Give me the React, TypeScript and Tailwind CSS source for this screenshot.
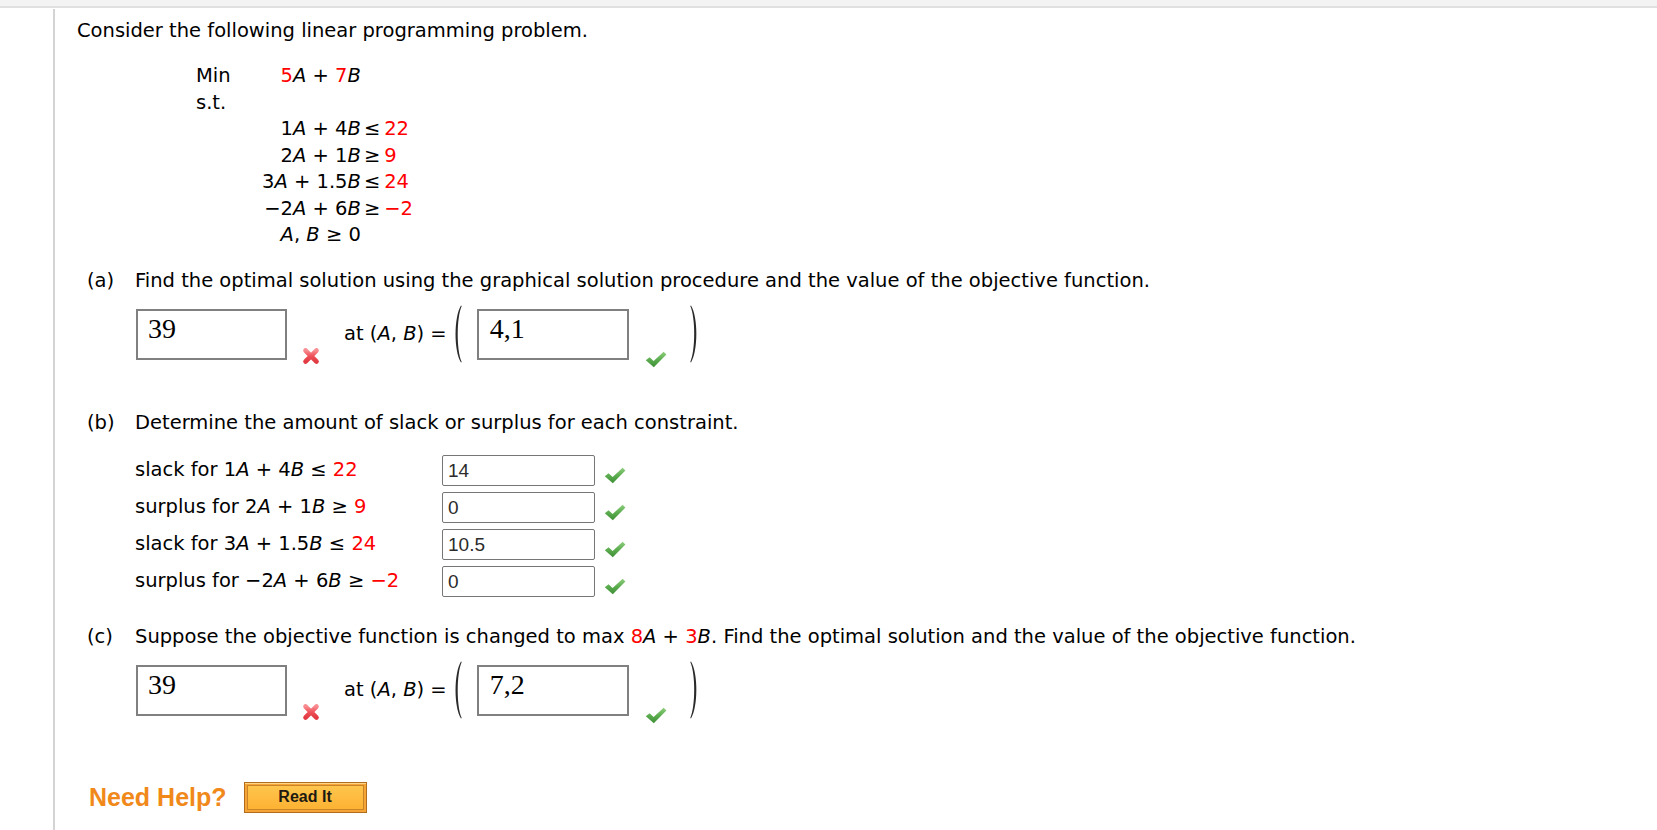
import React from "react";

const R = ({ children }: { children: React.ReactNode }) => (
  <span className="text-[#ff0000]">{children}</span>
);

const XIcon = ({ className = "" }: { className?: string }) => (
  <svg width="18" height="18" viewBox="0 0 18 18" className={className}>
    <defs>
      <linearGradient id="xg" x1="0" y1="0" x2="0" y2="1">
        <stop offset="0" stopColor="#f88c90" />
        <stop offset="0.5" stopColor="#ef525a" />
        <stop offset="1" stopColor="#e23a42" />
      </linearGradient>
    </defs>
    <path d="M3.5 3.5 L14.5 14.5 M14.5 3.5 L3.5 14.5" stroke="url(#xg)" strokeWidth="4.6" strokeLinecap="round" fill="none" />
  </svg>
);

const Check = ({ className = "" }: { className?: string }) => (
  <svg width="22" height="17" viewBox="0 0 22 17" className={className}>
    <defs>
      <linearGradient id="cg" x1="0" y1="0" x2="0" y2="1">
        <stop offset="0" stopColor="#8fce7e" />
        <stop offset="0.5" stopColor="#5cad4f" />
        <stop offset="1" stopColor="#3e8f36" />
      </linearGradient>
    </defs>
    <path d="M0.8 9.2 L4.6 6.2 L8.6 10 L18.6 0.8 L21.4 3.6 L8.8 16.2 Z" fill="url(#cg)" />
  </svg>
);

const ParenL = ({ className = "" }: { className?: string }) => (
  <svg width="9" height="58" viewBox="0 0 9 58" className={className}>
    <path d="M8 0.5 C0.8 12 0.8 46 8 57.5 L8.7 57 C3.4 45 3.4 13 8.7 1 Z" fill="#2a2a2a" />
  </svg>
);

const ParenR = ({ className = "" }: { className?: string }) => (
  <svg width="9" height="58" viewBox="0 0 9 58" className={className}>
    <path d="M1 0.5 C8.2 12 8.2 46 1 57.5 L0.3 57 C5.6 45 5.6 13 0.3 1 Z" fill="#2a2a2a" />
  </svg>
);

function AnswerRow({ value, pair }: { value: string; pair: string }) {
  return (
    <div className="flex h-[57px] items-center">
      <div className="ml-[1px] flex h-[51px] w-[151px] items-center border-2 border-[#808080] pb-[10px] pl-[10px] font-['Liberation_Serif'] text-[28px] leading-none text-black">
        {value}
      </div>
      <XIcon className="mb-[-2px] ml-[15px] self-end" />
      <span className="ml-[24px]">
        at (<i>A</i>, <i>B</i>) =
      </span>
      <ParenL className="ml-[6px]" />
      <div className="ml-[15px] flex h-[51px] w-[152px] items-center border-2 border-[#808080] pb-[10px] pl-[11px] font-['Liberation_Serif'] text-[28px] leading-none text-black">
        {pair}
      </div>
      <Check className="mb-[-5px] ml-[16px] self-end" />
      <ParenR className="ml-[23px]" />
    </div>
  );
}

function SlackRow({ label, value }: { label: React.ReactNode; value: string }) {
  return (
    <div className="flex h-[31px] items-center">
      <div className="w-[307px] whitespace-nowrap">{label}</div>
      <div className="flex h-[31px] w-[153px] items-center rounded-[2px] border border-[#767676] pl-[5px] font-['Liberation_Sans'] text-[19px] leading-none text-[#2b2b2b]">
        {value}
      </div>
      <Check className="ml-[9px] mt-[11px]" />
    </div>
  );
}

export default function App() {
  return (
    <div className="h-[830px] w-[1657px] overflow-hidden bg-white font-['DejaVu_Sans'] text-[19.5px] leading-[26px] text-black">
      <div className="h-[8px] border-b-2 border-[#e0e0e0] bg-[#f3f3f3]" />
      <div className="flex pt-[1px]">
        <div className="w-[53px] shrink-0" />
        <div className="h-[830px] flex-1 border-l-2 border-[#d4d4d4] pl-[22px] pt-[9px]">
          <div>Consider the following linear programming problem.</div>

          <div className="ml-[119px] mt-[19px] grid w-fit grid-cols-[66px_auto_auto] leading-[26.5px]">
            <div>Min</div>
            <div className="text-right">
              <R>5</R>
              <i>A</i> + <R>7</R>
              <i>B</i>
            </div>
            <div />
            <div>s.t.</div>
            <div />
            <div />
            <div />
            <div className="text-right">
              1<i>A</i> + 4<i>B</i>
            </div>
            <div className="pl-[3px]">
              ≤{"\u2009"}<R>22</R>
            </div>
            <div />
            <div className="text-right">
              2<i>A</i> + 1<i>B</i>
            </div>
            <div className="pl-[3px]">
              ≥{"\u2009"}<R>9</R>
            </div>
            <div />
            <div className="text-right">
              3<i>A</i> + 1.5<i>B</i>
            </div>
            <div className="pl-[3px]">
              ≤{"\u2009"}<R>24</R>
            </div>
            <div />
            <div className="text-right">
              −2<i>A</i> + 6<i>B</i>
            </div>
            <div className="pl-[3px]">
              ≥{"\u2009"}<R>−2</R>
            </div>
            <div />
            <div className="text-right">
              <i>A</i>, <i>B</i> ≥ 0
            </div>
            <div />
          </div>

          {/* (a) */}
          <div className="ml-[10px] mt-[19px] flex">
            <div className="w-[48px] shrink-0">(a)</div>
            <div className="flex-1">
              <div>Find the optimal solution using the graphical solution procedure and the value of the objective function.</div>
              <div className="mt-[12px]">
                <AnswerRow value="39" pair="4,1" />
              </div>
            </div>
          </div>

          {/* (b) */}
          <div className="ml-[10px] mt-[47px] flex">
            <div className="w-[48px] shrink-0">(b)</div>
            <div className="flex-1">
              <div>Determine the amount of slack or surplus for each constraint.</div>
              <div className="mt-[19px] flex flex-col gap-[6px]">
                <SlackRow
                  label={
                    <>
                      slack for 1<i>A</i> + 4<i>B</i> ≤ <R>22</R>
                    </>
                  }
                  value="14"
                />
                <SlackRow
                  label={
                    <>
                      surplus for 2<i>A</i> + 1<i>B</i> ≥ <R>9</R>
                    </>
                  }
                  value="0"
                />
                <SlackRow
                  label={
                    <>
                      slack for 3<i>A</i> + 1.5<i>B</i> ≤ <R>24</R>
                    </>
                  }
                  value="10.5"
                />
                <SlackRow
                  label={
                    <>
                      surplus for −2<i>A</i> + 6<i>B</i> ≥ <R>−2</R>
                    </>
                  }
                  value="0"
                />
              </div>
            </div>
          </div>

          {/* (c) */}
          <div className="ml-[10px] mt-[27px] flex">
            <div className="w-[48px] shrink-0">(c)</div>
            <div className="flex-1">
              <div>
                Suppose the objective function is changed to max <R>8</R>
                <i>A</i> + <R>3</R>
                <i>B</i>. Find the optimal solution and the value of the objective function.
              </div>
              <div className="mt-[12px]">
                <AnswerRow value="39" pair="7,2" />
              </div>
            </div>
          </div>

          {/* Need help */}
          <div className="ml-[12px] mt-[63px] flex items-center">
            <span className="font-['Liberation_Sans'] text-[25px] font-bold leading-[30px] text-[#f0891a]">Need Help?</span>
            <div className="ml-[17px] h-[31px] w-[123px] border border-[#b06d1c] bg-[#f7a437] p-[2px] shadow-[inset_0_1px_0_#ffd58a]">
              <div className="flex h-full w-full items-center justify-center border border-[#c9842a] bg-gradient-to-b from-[#ffc54d] to-[#fdb232] font-['Liberation_Sans'] text-[16px] font-bold leading-none text-[#1e1a12]">
                Read It
              </div>
            </div>
          </div>
        </div>
      </div>
    </div>
  );
}
